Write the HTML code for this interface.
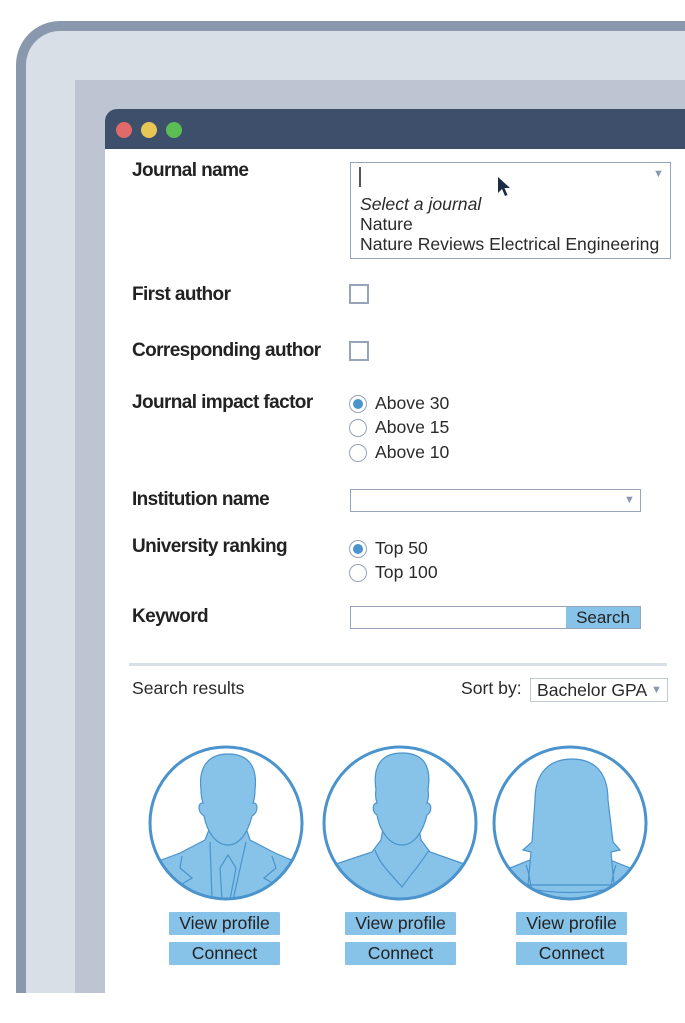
<!DOCTYPE html>
<html><head><style>
*{margin:0;padding:0;box-sizing:border-box}
body{width:685px;height:1023px;position:relative;overflow:hidden;background:#fff;font-family:"Liberation Sans",sans-serif;color:#222}
.a{position:absolute}
.lbl{position:absolute;left:132px;font-weight:bold;font-size:19px;letter-spacing:-0.6px;color:#222}
.t{position:absolute;font-size:17.6px;color:#2a2a2a}
.cb{position:absolute;width:20px;height:20px;border:2px solid #97a3b8;background:#fff}
.rd{position:absolute;width:18px;height:18px;border:1.5px solid #97a3b8;border-radius:50%;background:#fff}
.rd.on::after{content:"";position:absolute;left:2.5px;top:2.5px;width:10px;height:10px;border-radius:50%;background:#4a93cc}
.btn{position:absolute;width:111px;height:23px;background:#87c2e8;font-size:17.6px;text-align:center;line-height:23px;color:#222;border-radius:1px}
</style></head><body>
<div class="a" style="left:16px;top:21px;width:720px;height:972px;background:#8a98ae;border-radius:44px 0 0 0"></div>
<div class="a" style="left:26px;top:31px;width:720px;height:962px;background:#d8dfe7;border-radius:34px 0 0 0"></div>
<div class="a" style="left:75px;top:80px;width:720px;height:913px;background:#bdc5d2"></div>
<div class="a" style="left:105px;top:109px;width:700px;height:914px;background:#fff;border-radius:12px 0 0 0;overflow:hidden">
<div style="height:40px;background:#3d4f6b"></div></div>
<div class="a" style="left:116px;top:122px;width:16px;height:16px;border-radius:50%;background:#e06a6a"></div>
<div class="a" style="left:141px;top:122px;width:16px;height:16px;border-radius:50%;background:#e8c656"></div>
<div class="a" style="left:166px;top:122px;width:16px;height:16px;border-radius:50%;background:#5cbd55"></div>

<div class="lbl" style="top:160px">Journal name</div>
<div class="a" style="left:350px;top:162px;width:321px;height:97px;border:1.5px solid #97a3b8"></div>
<div class="a" style="left:359px;top:167px;width:1.5px;height:20px;background:#555"></div>
<div class="a" style="left:653px;top:168px;font-size:11px;color:#8a98ae">▼</div>
<svg class="a" style="left:496px;top:176px" width="16" height="24" viewBox="0 0 16 24"><path d="M2 1 L2 17 L6 13 L9 20 L11.5 19 L8.5 12 L14 12 Z" fill="#1d2b45"/></svg>
<div class="t" style="left:360px;top:194px;font-style:italic">Select a journal</div>
<div class="t" style="left:360px;top:214px">Nature</div>
<div class="t" style="left:360px;top:234px">Nature Reviews Electrical Engineering</div>

<div class="lbl" style="top:284px">First author</div>
<div class="cb" style="left:349px;top:284px"></div>
<div class="lbl" style="top:340px">Corresponding author</div>
<div class="cb" style="left:349px;top:341px"></div>

<div class="lbl" style="top:392px">Journal impact factor</div>
<div class="rd on" style="left:349px;top:395px"></div><div class="t" style="left:375px;top:393px">Above 30</div>
<div class="rd" style="left:349px;top:419px"></div><div class="t" style="left:375px;top:417px">Above 15</div>
<div class="rd" style="left:349px;top:444px"></div><div class="t" style="left:375px;top:442px">Above 10</div>

<div class="lbl" style="top:489px">Institution name</div>
<div class="a" style="left:350px;top:489px;width:291px;height:23px;border:1.5px solid #97a3b8"></div>
<div class="a" style="left:624px;top:494px;font-size:11px;color:#8a98ae">▼</div>

<div class="lbl" style="top:536px">University ranking</div>
<div class="rd on" style="left:349px;top:540px"></div><div class="t" style="left:375px;top:538px">Top 50</div>
<div class="rd" style="left:349px;top:564px"></div><div class="t" style="left:375px;top:562px">Top 100</div>

<div class="lbl" style="top:606px">Keyword</div>
<div class="a" style="left:350px;top:606px;width:291px;height:23px;border:1.5px solid #97a3b8"></div>
<div class="a" style="left:566px;top:607px;width:74px;height:21px;background:#87c2e8;font-size:17px;text-align:center;line-height:21px">Search</div>

<div class="a" style="left:129px;top:663px;width:538px;height:3px;background:#d8dfe7"></div>
<div class="t" style="left:132px;top:678px">Search results</div>
<div class="t" style="left:461px;top:678px">Sort by:</div>
<div class="a" style="left:530px;top:678px;width:138px;height:24px;border:1.5px solid #c2cad6"></div>
<div class="t" style="left:537px;top:680px">Bachelor GPA</div>
<div class="a" style="left:651px;top:684px;font-size:11px;color:#8a98ae">▼</div>

<svg class="a" style="left:0;top:0" width="685" height="1023">
<defs>
<clipPath id="c1"><circle cx="226" cy="823" r="75"/></clipPath>
<clipPath id="c2"><circle cx="400" cy="823" r="75"/></clipPath>
<clipPath id="c3"><circle cx="570" cy="823" r="75"/></clipPath>
</defs>
<g fill="#87c2e8" stroke="#4a93cc" stroke-width="1.2">
<g clip-path="url(#c1)">
<path d="M140 900 L140 868 L180 853 L205 840 L212 822 L244 822 L250 840 L275 853 L310 868 L310 900Z"/>
<path d="M201 790 C198 765 210 754 228 754 C247 754 258 765 255 790 C255 795 254 801 253 803 C258 802 259 812 252 816 C248 832 240 845 228 845 C216 845 207 832 204 816 C197 812 198 802 203 803 C202 800 201 795 201 790Z"/>
<path d="M182 856 L180 868 L192 878 L182 884 M272 856 L276 868 L264 878 L274 884 M210 842 L212 900 M246 842 L233 900 M220 868 L228 855 L236 868 L230 900 M220 868 L222 900" fill="none"/>
</g>
<g clip-path="url(#c2)">
<path d="M320 900 L330 866 L372 852 L381 840 L384 822 L418 822 L421 840 L430 852 L470 866 L480 900Z"/>
<path d="M376 790 C372 764 383 753 402 753 C422 753 432 764 428 790 C429 795 428 800 427 803 C432 803 432 812 427 815 C423 832 414 845 402 845 C390 845 380 832 377 815 C372 812 372 803 377 803 C376 800 375 795 376 790Z"/>
<path d="M375 850 C380 865 392 875 402 887 C410 875 420 865 429 850" fill="none"/>
</g>
<g clip-path="url(#c3)">
<path d="M490 900 L505 870 L530 860 L610 860 L635 870 L650 900Z"/>
<path d="M535 800 C535 772 550 759 572 759 C594 759 608 772 608 800 L613 842 L620 850 L611 852 L614 885 L528 885 L531 852 L523 850 L532 842Z"/>
<path d="M526 865 C530 875 530 885 533 895 M616 865 C612 875 612 885 609 895 M528 888 C550 894 590 894 612 888" fill="none"/>
</g>
</g>
<g fill="none" stroke="#4a93cc" stroke-width="3">
<circle cx="226" cy="823" r="76"/><circle cx="400" cy="823" r="76"/><circle cx="570" cy="823" r="76"/>
</g>
</svg>

<div class="btn" style="left:169px;top:912px">View profile</div>
<div class="btn" style="left:169px;top:942px">Connect</div>
<div class="btn" style="left:345px;top:912px">View profile</div>
<div class="btn" style="left:345px;top:942px">Connect</div>
<div class="btn" style="left:516px;top:912px">View profile</div>
<div class="btn" style="left:516px;top:942px">Connect</div>
</body></html>
